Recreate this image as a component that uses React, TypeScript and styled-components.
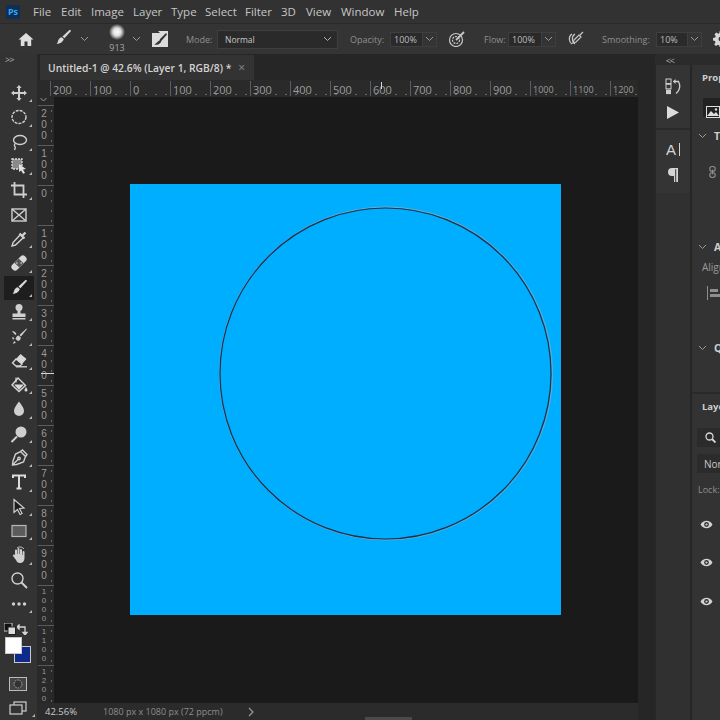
import * as React from "react";
import styled, { createGlobalStyle } from "styled-components";

const GlobalStyle = createGlobalStyle`
  html, body { margin: 0; padding: 0; background: #2b2b2b; }
  * { box-sizing: border-box; }
`;

const MENU_ITEMS = [
  ["File", 28],
  ["Edit", 30],
  ["Image", 42],
  ["Layer", 38],
  ["Type", 34],
  ["Select", 40],
  ["Filter", 36],
  ["3D", 25],
  ["View", 35],
  ["Window", 53],
  ["Help", 30],
];

const H_RULER = ["200", "100", "0", "100", "200", "300", "400", "500", "600", "700", "800", "900", "1000", "1100", "1200"];
const V_RULER = ["200", "100", "0", "100", "200", "300", "400", "500", "600", "700", "800", "900", "1000", "1100", "1200"];

const Screen = styled.div`
  width: 720px;
  height: 720px;
  overflow: hidden;
  position: relative;
  display: flex;
  flex-direction: column;
  background: #2b2b2b;
  color: #c4c4c4;
  font-family: "Open Sans", "Noto Sans", sans-serif;
`;

const MenuBar = styled.div`
  height: 23px;
  flex: none;
  display: flex;
  align-items: center;
  padding-left: 6px;
  background: #323232;
  font-size: 11.5px;
  color: #c6c6c6;
`;

const PsLogo = styled.div`
  width: 14px;
  height: 14px;
  margin-right: 13px;
  border-radius: 2px;
  background: #0f2f55;
  color: #31a8ff;
  font-size: 9px;
  font-weight: 700;
  line-height: 14px;
  text-align: center;
`;

const MenuItem = styled.span<{ $w: number }>`
  width: ${(p) => p.$w}px;
  flex: none;
`;

const OptionsBar = styled.div`
  height: 31px;
  flex: none;
  display: flex;
  align-items: center;
  background: #343434;
  border-top: 1px solid #2a2a2a;
  font-size: 9px;
  color: #8f8f8f;
`;

const OptionIcon = styled.svg<{ $left: number }>`
  flex: none;
  margin-left: ${(p) => p.$left}px;
  display: block;
`;

const BrushPreview = styled.div`
  flex: none;
  width: 30px;
  margin: -2px 0 0 13px;
  display: flex;
  flex-direction: column;
  align-items: center;
  gap: 3px;
  font-size: 9px;
  line-height: 10px;
  color: #a4a4a4;
`;

const BrushDot = styled.div`
  width: 16px;
  height: 16px;
  border-radius: 50%;
  background: radial-gradient(circle, #ffffff 0%, #dddddd 35%, #343434 72%);
`;

const OptionLabel = styled.span<{ $left: number; $w: number }>`
  flex: none;
  width: ${(p) => p.$w}px;
  margin-left: ${(p) => p.$left}px;
  white-space: nowrap;
`;

const SelectBox = styled.div<{ $left: number; $w: number }>`
  flex: none;
  width: ${(p) => p.$w}px;
  height: 19px;
  margin-left: ${(p) => p.$left}px;
  display: flex;
  align-items: center;
  justify-content: space-between;
  padding: 0 5px 0 7px;
  border: 1px solid #3f3f3f;
  background: #2a2a2a;
  color: #c6c6c6;
  font-size: 8.5px;
`;

const PercentBox = styled.div<{ $left: number; $w: number }>`
  flex: none;
  width: ${(p) => p.$w}px;
  height: 15px;
  margin-left: ${(p) => p.$left}px;
  display: flex;
  align-items: center;
  padding-left: 3px;
  background: #2a2a2a;
  border: 1px solid #3e3e3e;
  color: #bdbdbd;
  font-size: 9px;
`;

const ChevronBox = styled.div`
  flex: none;
  width: 14px;
  height: 15px;
  display: flex;
  align-items: center;
  justify-content: center;
  border: 1px solid #3e3e3e;
  border-left: none;
`;

const Body = styled.div`
  flex: 1;
  min-height: 0;
  display: flex;
`;

const ToolColumn = styled.div`
  width: 38px;
  flex: none;
  position: relative;
  display: flex;
  flex-direction: column;
  padding-top: 27px;
  background: #333333;
  border-right: 1px solid #2a2a2a;
`;

const CollapseMark = styled.span`
  position: absolute;
  left: 5px;
  top: -1px;
  font-size: 9px;
  color: #b0b0b0;
  letter-spacing: -1px;
`;

const ToolButton = styled.div<{ $active?: boolean }>`
  height: 24.4px;
  width: 30px;
  margin-left: 4px;
  position: relative;
  display: flex;
  align-items: center;
  justify-content: center;
  background: ${(p) => (p.$active ? "#1e1e1e" : "transparent")};
  svg {
    display: block;
  }
`;

const CornerMark = styled.i`
  position: absolute;
  right: 2px;
  bottom: 3px;
  width: 0;
  height: 0;
  border-left: 3px solid transparent;
  border-bottom: 3px solid #b8b8b8;
`;

const SwatchTools = styled.div`
  height: 20px;
  display: flex;
  align-items: center;
  justify-content: space-between;
  padding: 6px 9px 0 4px;
`;

const SwatchStack = styled.div`
  position: relative;
  height: 28px;
  margin: 1px 0 0 4px;
`;

const Swatch = styled.div<{ $color: string; $x: number; $y: number }>`
  position: absolute;
  left: ${(p) => p.$x}px;
  top: ${(p) => p.$y}px;
  width: 17px;
  height: 17px;
  background: ${(p) => p.$color};
  border: 1px solid #c8c8c8;
`;

const BottomTool = styled.div<{ $top: number }>`
  height: 24px;
  margin-top: ${(p) => p.$top}px;
  display: flex;
  align-items: center;
  justify-content: center;
  padding-right: 2px;
  position: relative;
`;

const Workspace = styled.div`
  width: 617px;
  flex: none;
  display: flex;
  background: #262626;
`;

const DocColumn = styled.div`
  width: 600px;
  flex: none;
  display: flex;
  flex-direction: column;
`;

const TabStrip = styled.div`
  height: 26px;
  flex: none;
  display: flex;
  padding: 1px 0 0 2px;
  background: #262626;
`;

const DocTab = styled.div`
  width: 214px;
  display: flex;
  align-items: center;
  justify-content: space-between;
  padding: 0 9px 0 8px;
  background: #333333;
  color: #d4d4d4;
  font-size: 10.3px;
  font-weight: 600;
  white-space: nowrap;
`;

const CloseMark = styled.span`
  color: #8a8a8a;
  font-size: 12px;
  font-weight: 400;
`;

const HRuler = styled.div`
  height: 17px;
  flex: none;
  position: relative;
  display: flex;
  padding-left: 12px;
  background: #2a2a2a;
  overflow: hidden;
`;

const HTick = styled.div<{ $small: boolean }>`
  width: 40px;
  flex: none;
  height: 15px;
  margin-top: 1px;
  padding-left: 2px;
  border-left: 1px solid #5c5c5c;
  color: #9c9c9c;
  font-size: ${(p) => (p.$small ? "9px" : "11px")};
  line-height: 17px;
  background: radial-gradient(circle, #666 0.7px, transparent 1px) 0 12px / 10px 3px repeat-x;
`;

const RulerMarker = styled.i`
  position: absolute;
  left: 343px;
  top: 2px;
  width: 1px;
  height: 7px;
  background: #d8d8d8;
`;

const Stage = styled.div`
  flex: 1;
  min-height: 0;
  display: flex;
`;

const VRuler = styled.div`
  width: 16px;
  flex: none;
  position: relative;
  padding-top: 8px;
  background: #2a2a2a;
  overflow: hidden;
  will-change: opacity;
  opacity: 0.99;
`;

const VTick = styled.div<{ $tight: boolean }>`
  height: 40px;
  padding: ${(p) => (p.$tight ? "1px" : "2px")} 0 0 1px;
  border-top: 1px solid #5c5c5c;
  color: #9c9c9c;
  font-family: "Liberation Sans", sans-serif;
  font-size: ${(p) => (p.$tight ? "8px" : "10px")};
  line-height: ${(p) => (p.$tight ? "9px" : "11px")};
  background: radial-gradient(circle, #666 0.7px, transparent 1px) 12px 0 / 3px 10px repeat-y;
  span {
    display: block;
    width: 10px;
    text-align: center;
  }
`;

const VMarker = styled.i`
  position: absolute;
  left: 3px;
  top: 276px;
  width: 13px;
  height: 1px;
  background: #d8d8d8;
`;

const CornerChevron = styled.svg`
  position: absolute;
  left: 2px;
  top: 0;
`;

const Pasteboard = styled.div`
  flex: 1;
  padding: 87px 0 0 76px;
  background: #1a1a1a;
`;

const Artboard = styled.div`
  width: 431px;
  height: 431px;
  background: #00aeff;
  svg {
    display: block;
  }
`;

const StatusBar = styled.div`
  height: 17px;
  flex: none;
  display: flex;
  align-items: center;
  padding-left: 7px;
  background: #2b2b2b;
  font-size: 9px;
  color: #8e8e8e;
`;

const ZoomValue = styled.span`
  width: 58px;
  font-size: 9.5px;
  color: #c8c8c8;
`;

const DocSize = styled.span`
  width: 145px;
  white-space: nowrap;
`;

const Gutter = styled.div`
  flex: 1;
`;

const Dock = styled.div`
  width: 37px;
  flex: none;
  background: #303030;
  border-left: 1px solid #282828;
  border-right: 2px solid #262626;
  margin-top: 11px;
`;

const DockTop = styled.div`
  position: absolute;
  right: 46px;
  top: 54px;
  font-size: 9px;
  color: #b0b0b0;
  letter-spacing: -1px;
`;

const DockGroup = styled.div<{ $h: number; $pad: number; $line?: boolean }>`
  height: ${(p) => p.$h}px;
  padding-top: ${(p) => p.$pad}px;
  display: flex;
  flex-direction: column;
  align-items: center;
  gap: 10px;
  background: #343434;
  border-bottom: ${(p) => (p.$line ? "2px solid #2a2a2a" : "none")};
  svg {
    flex: none;
  }
`;

const SidePanel = styled.div`
  width: 28px;
  flex: none;
  display: flex;
  flex-direction: column;
  margin-top: 11px;
  background: #333333;
  overflow: hidden;
  white-space: nowrap;
`;

const PanelTitle = styled.div<{ $h: number }>`
  height: ${(p) => p.$h}px;
  flex: none;
  padding: 6px 0 0 10px;
  font-size: 9.5px;
  font-weight: 700;
  color: #cfcfcf;
`;

const ThumbBox = styled.div`
  height: 19px;
  flex: none;
  margin: 0 0 0 11px;
  padding: 3px 0 0 3px;
  background: #222222;
`;

const SectionHead = styled.div<{ $h: number }>`
  height: ${(p) => p.$h}px;
  flex: none;
  padding-left: 6px;
  display: flex;
  align-items: flex-start;
  font-size: 10.5px;
  font-weight: 700;
  color: #cfcfcf;
  svg {
    flex: none;
  }
`;

const SectionInner = styled.div`
  display: flex;
  align-items: center;
  gap: 7px;
  margin-top: 12px;
`;

const PanelGap = styled.div<{ $h: number }>`
  height: ${(p) => p.$h}px;
  flex: none;
`;

const AlignLabel = styled.div`
  padding-left: 10px;
  font-size: 10px;
  color: #9a9a9a;
  height: 16px;
  flex: none;
`;

const IconRow = styled.div<{ $h: number; $pad: number }>`
  height: ${(p) => p.$h}px;
  flex: none;
  padding-left: ${(p) => p.$pad}px;
  display: flex;
  align-items: center;
  svg {
    flex: none;
  }
`;

const LayersPanel = styled.div`
  flex: 1;
  display: flex;
  flex-direction: column;
  background: #333333;
  border-top: 2px solid #2a2a2a;
`;

const LayerField = styled.div<{ $pad: number }>`
  height: 19px;
  flex: none;
  margin: 0 0 7px 5px;
  padding-left: ${(p) => p.$pad}px;
  display: flex;
  align-items: center;
  gap: 4px;
  background: #2b2b2b;
  font-size: 10px;
  color: #c8c8c8;
  svg {
    flex: none;
  }
`;

const LockLabel = styled.div`
  height: 22px;
  flex: none;
  margin-top: 3px;
  padding-left: 6px;
  font-size: 9px;
  color: #8f8f8f;
`;

const LayerRow = styled.div`
  height: 38.5px;
  flex: none;
  padding-left: 8px;
  display: flex;
  align-items: center;
  svg {
    flex: none;
  }
`;

const BottomNub = styled.i`
  position: absolute;
  left: 365px;
  bottom: 0;
  width: 47px;
  height: 3px;
  background: #4a4a4a;
`;

const Chevron = ({ left = 0, color = "#9a9a9a" }: { left?: number; color?: string }) => (
  <OptionIcon $left={left} width="9" height="6" viewBox="0 0 9 6" fill="none" stroke={color} strokeWidth="1">
    <path d="M1 1l3.5 3.5L8 1" />
  </OptionIcon>
);

const BrushGlyph = ({ size = 18, color = "#d8d8d8" }: { size?: number; color?: string }) => (
  <svg width={size} height={size} viewBox="0 0 18 18" fill={color}>
    <path d="M16.5 1.2c.5.4.4 1 0 1.5L10 9.9 7.9 8 15 1.4c.5-.4 1-.5 1.500-.2z" />
    <path d="M7.200 8.800l2 1.900c-.4 2.800-3.600 5.300-7.600 5 1.500-.9 1.300-2.600 2-4 .7-1.600 2-2.600 3.600-2.900z" />
  </svg>
);

const Stroke = ({ children, size = 18 }: { children: React.ReactNode; size?: number }) => (
  <svg width={size} height={size} viewBox="0 0 18 18" fill="none" stroke="#cfcfcf" strokeWidth="1.4">
    {children}
  </svg>
);

const Filled = ({ children, size = 18 }: { children: React.ReactNode; size?: number }) => (
  <svg width={size} height={size} viewBox="0 0 18 18" fill="#cfcfcf">
    {children}
  </svg>
);

const TOOLS: { key: string; icon: React.ReactNode; corner?: boolean; active?: boolean }[] = [
  { key: "move", corner: true, icon: <Filled><path d="M9 1l2.600 3H10v4h4V6.400L17 9l-3 2.600V10h-4v4h1.600L9 17l-2.600-3H8v-4H4v1.600L1 9l3-2.600V8h4V4H6.400z" /></Filled> },
  { key: "marquee", corner: true, icon: <Stroke><ellipse cx="9" cy="9" rx="7" ry="6.500" strokeDasharray="3 1" /></Stroke> },
  { key: "lasso", corner: true, icon: <Stroke><ellipse cx="10" cy="7" rx="6.500" ry="4.500" /><path d="M5 10.500c-1 2-.5 3 .5 3.500M5.500 14l-1 3" /></Stroke> },
  { key: "subject", corner: true, icon: <svg width="18" height="18" viewBox="0 0 18 18"><rect x="2" y="2" width="10" height="10" fill="#8a8a8a" stroke="#dcdcdc" strokeWidth="1.300" strokeDasharray="2 1" /><path d="M9 7l7 5-3 .6 2 3.400-2 .8-1.800-3.400L9 15z" fill="#e2e2e2" /></svg> },
  { key: "crop", corner: true, icon: <Stroke><path d="M1 4.500h12.500V17M4.500 1v12.500H17" strokeWidth="1.800" /></Stroke> },
  { key: "frame", icon: <Stroke><rect x="2" y="3" width="14" height="12" /><path d="M2 3l14 12M16 3L2 15" /></Stroke> },
  { key: "eyedropper", corner: true, icon: <Stroke><path d="M10 5L3 12.500 2 16l3.500-1L13 8" /><path d="M9.500 3.500l5 5M12 6l3.500-3.500" strokeWidth="2.400" /></Stroke> },
  { key: "heal", corner: true, icon: <svg width="20" height="20" viewBox="0 0 20 20"><g transform="rotate(-45 10 10)"><rect x="1" y="6.500" width="18" height="7" rx="3" fill="#d8d8d8" /><rect x="7" y="6.500" width="6" height="7" fill="#555" /><circle cx="8.500" cy="8.500" r=".8" fill="#ddd" /><circle cx="11.500" cy="11.500" r=".8" fill="#ddd" /></g></svg> },
  { key: "brush", corner: true, active: true, icon: <BrushGlyph size={17} /> },
  { key: "stamp", corner: true, icon: <Filled><circle cx="9" cy="4.500" r="3.500" /><path d="M7.500 7h3v3.500h5V14h-13v-3.500h5z" /><rect x="2.500" y="15" width="13" height="1.500" /></Filled> },
  { key: "mixer", corner: true, icon: <Filled><path d="M16.500 1.500L9.500 8l1.500 1.500 6-7.500zM8.500 8.500c-2 .5-2.500 2-3 3.500l2.500 2c2-.5 2.800-2 2.800-3.500zM2 4c2 0 3.500 1 4.500 3L5.500 8C4 6.500 3 5.500 2 4zM2 10l2.500 1L3 13zM4 14l2 1.500L3 17z" /></Filled> },
  { key: "eraser", corner: true, icon: <svg width="18" height="18" viewBox="0 0 18 18"><path d="M10.500 2l6 5-4.500 5-6-5z" fill="#d8d8d8" /><path d="M6 7l6 5-2 2H6L2.500 11z" fill="none" stroke="#d8d8d8" strokeWidth="1.300" /><path d="M6 14.800h11" stroke="#d8d8d8" strokeWidth="1.300" /></svg> },
  { key: "bucket", corner: true, icon: <svg width="18" height="18" viewBox="0 0 18 18"><path d="M8 2l7.500 7.500L9 15.500 2 9z" fill="none" stroke="#d8d8d8" strokeWidth="1.400" /><path d="M4 8.500h10L9 14z" fill="#d8d8d8" /><path d="M6 1.500v5" stroke="#d8d8d8" strokeWidth="1.200" /><path d="M16 11c1 1.500 1.400 2.500 1.400 3.200a1.400 1.400 0 01-2.800 0c0-.7.400-1.700 1.400-3.200z" fill="#d8d8d8" /></svg> },
  { key: "blur", corner: true, icon: <Filled><path d="M9 1.500c3 4 5 6.500 5 9.500a5 5 0 01-10 0c0-3 2-5.500 5-9.500z" /></Filled> },
  { key: "dodge", corner: true, icon: <svg width="18" height="18" viewBox="0 0 18 18"><circle cx="11" cy="7" r="5.500" fill="#cfcfcf" /><path d="M7 11.500L1.500 17" stroke="#cfcfcf" strokeWidth="2" /></svg> },
  { key: "pen", corner: true, icon: <Stroke><path d="M10.500 2.500l5 5-2 5.500-7 2.500-4 .5.500-4 2.500-7z" /><path d="M10.500 2.500l2-1.500 4.500 4.500-1.500 2M2.500 16L8 10.500" /><circle cx="9" cy="9.500" r="1.200" /></Stroke> },
  { key: "type", corner: true, icon: <svg width="18" height="18" viewBox="0 0 18 18"><path d="M3 5V2.500h12V5M9 2.500v13M6.500 15.500h5" fill="none" stroke="#dcdcdc" strokeWidth="2" /></svg> },
  { key: "path", corner: true, icon: <svg width="18" height="18" viewBox="0 0 18 18"><path d="M4 1.500l10 8.500-4.500.5 2.500 5-2 1-2.500-5L4 14.500z" fill="#1c1c1c" stroke="#cfcfcf" strokeWidth="1.200" /></svg> },
  { key: "rect", corner: true, icon: <svg width="18" height="18" viewBox="0 0 18 18"><rect x="2" y="3.500" width="14" height="11" fill="#5c5c5c" stroke="#b8b8b8" strokeWidth="1.200" /></svg> },
  { key: "hand", corner: true, icon: <Filled><path d="M5 9V4.500a1 1 0 012 0V8h.5V3a1 1 0 012 0v5h.5V4a1 1 0 012 0v5h.5V6a1 1 0 012 0v6c0 3-2 5-4.500 5S7 16 6 14l-3-4c-.6-1 .8-2 1.600-1.200z" /><path d="M7 2C8.500.5 12 .5 14 3" fill="none" stroke="#cfcfcf" /></Filled> },
  { key: "zoom", icon: <Stroke><circle cx="7.500" cy="7.500" r="5.500" /><path d="M11.500 11.500L17 17" strokeWidth="2" /></Stroke> },
  { key: "more", corner: true, icon: <Filled><circle cx="3.500" cy="9" r="1.700" /><circle cx="9" cy="9" r="1.700" /><circle cx="14.500" cy="9" r="1.700" /></Filled> },
];

const Eye = () => (
  <svg width="13" height="9" viewBox="0 0 13 9">
    <path d="M.5 4.500C2 2 4 .8 6.500.8S11 2 12.500 4.500C11 7 9 8.200 6.500 8.200S2 7 .5 4.500z" fill="#d4d4d4" />
    <circle cx="6.500" cy="4.500" r="2.400" fill="#333" />
    <circle cx="6.500" cy="4.500" r="1.100" fill="#d4d4d4" />
  </svg>
);

export default function App() {
  return (
    <Screen>
      <GlobalStyle />
      <MenuBar>
        <PsLogo>Ps</PsLogo>
        {MENU_ITEMS.map(([name, width]) => (
          <MenuItem key={name as string} $w={width as number}>
            {name}
          </MenuItem>
        ))}
      </MenuBar>

      <OptionsBar>
        <OptionIcon $left={18} width="16" height="15" viewBox="0 0 16 15" fill="#dedede">
          <path d="M8 1L.5 7.500h2.300V14h3.700V9.500h3V14h3.700V7.500h2.300z" />
        </OptionIcon>
        <OptionIcon as="div" $left={21}>
          <BrushGlyph size={17} />
        </OptionIcon>
        <Chevron left={8} />
        <BrushPreview>
          <BrushDot />
          913
        </BrushPreview>
        <Chevron />
        <OptionIcon $left={11} width="16" height="16" viewBox="0 0 16 16">
          <rect width="16" height="16" fill="#dcdcdc" />
          <path d="M14 2L8 8l-.5 1.500C5.500 10 5 12 2.500 13.500 6 14.500 9 12.500 9.500 9.800L15 3.500z" fill="#343434" />
          <path d="M0 0h6l2 2H0z" fill="#343434" />
        </OptionIcon>
        <OptionLabel $left={18} $w={31}>Mode:</OptionLabel>
        <SelectBox $left={0} $w={121}>
          Normal
          <Chevron color="#b0b0b0" />
        </SelectBox>
        <OptionLabel $left={12} $w={40}>Opacity:</OptionLabel>
        <PercentBox $left={0} $w={33}>100%</PercentBox>
        <ChevronBox><Chevron /></ChevronBox>
        <OptionIcon $left={11} width="18" height="16" viewBox="0 0 18 16" fill="none" stroke="#c8c8c8" strokeWidth="1.200">
          <circle cx="8" cy="9" r="6.500" />
          <circle cx="8" cy="9" r="3.500" strokeDasharray="2 1" />
          <path d="M8 9l8-8" strokeWidth="1.800" />
        </OptionIcon>
        <OptionLabel $left={18} $w={24}>Flow:</OptionLabel>
        <PercentBox $left={0} $w={34}>100%</PercentBox>
        <ChevronBox><Chevron /></ChevronBox>
        <OptionIcon $left={11} width="18" height="16" viewBox="0 0 18 16" fill="none" stroke="#c8c8c8" strokeWidth="1.200">
          <path d="M5 3a6 6 0 000 10" />
          <path d="M8 3a6 6 0 000 10" />
          <path d="M7 9l5-5 2 2-5 5-3 1zM13 4l3-3" />
        </OptionIcon>
        <OptionLabel $left={17} $w={54}>Smoothing:</OptionLabel>
        <PercentBox $left={0} $w={32}>10%</PercentBox>
        <ChevronBox><Chevron /></ChevronBox>
        <OptionIcon $left={11} width="16" height="16" viewBox="0 0 16 16" fill="#d8d8d8">
          <path d="M6.700 0h2.600l.4 2.200 1.400.6 1.900-1.300 1.800 1.800-1.300 1.900.6 1.400 2.200.4v2.600l-2.200.4-.6 1.400 1.300 1.900-1.800 1.800-1.900-1.300-1.400.6-.4 2.200H6.700l-.4-2.200-1.400-.6L3 15.100l-1.800-1.800 1.300-1.900-.6-1.400L0 9.600V7l2.200-.4.600-1.400L1.500 3.300 3.300 1.500l1.900 1.300 1.100-.6zM8 5.500a2.500 2.500 0 100 5 2.500 2.500 0 000-5z" />
        </OptionIcon>
      </OptionsBar>

      <Body>
        <ToolColumn>
          <CollapseMark>&gt;&gt;</CollapseMark>
          {TOOLS.map((tool) => (
            <ToolButton key={tool.key} $active={tool.active}>
              {tool.icon}
              {tool.corner && <CornerMark />}
            </ToolButton>
          ))}
          <SwatchTools>
            <svg width="12" height="12" viewBox="0 0 12 12">
              <rect x="0" y="0" width="8" height="8" fill="#111" stroke="#ccc" />
              <rect x="4" y="4" width="7.500" height="7.500" fill="#ddd" stroke="#222" />
            </svg>
            <svg width="11" height="11" viewBox="0 0 11 11" fill="none" stroke="#d4d4d4" strokeWidth="1.300">
              <path d="M1 3h7v7M0 3l2-2v4zM8 11L6 8.500h4z" />
            </svg>
          </SwatchTools>
          <SwatchStack>
            <Swatch $color="#0d2a8c" $x={10} $y={9} />
            <Swatch $color="#ffffff" $x={1} $y={0} />
          </SwatchStack>
          <BottomTool $top={7}>
            <svg width="18" height="14" viewBox="0 0 18 14">
              <rect x=".5" y=".5" width="17" height="13" fill="#444" stroke="#bbb" />
              <circle cx="9" cy="7" r="4" fill="#333" stroke="#aaa" strokeDasharray="1.500 1" />
            </svg>
          </BottomTool>
          <BottomTool $top={0}>
            <svg width="18" height="15" viewBox="0 0 18 15" fill="#333" stroke="#cfcfcf" strokeWidth="1.200">
              <rect x="5" y="1" width="12" height="9" />
              <rect x="1" y="4" width="12" height="9" />
            </svg>
            <CornerMark />
          </BottomTool>
        </ToolColumn>

        <Workspace>
          <DocColumn>
            <TabStrip>
              <DocTab>
                Untitled-1 @ 42.6% (Layer 1, RGB/8) *
                <CloseMark>×</CloseMark>
              </DocTab>
            </TabStrip>
            <HRuler>
              {H_RULER.map((label, i) => (
                <HTick key={i} $small={label.length > 3}>{label}</HTick>
              ))}
              <RulerMarker />
            </HRuler>
            <Stage>
              <VRuler>
                <CornerChevron width="7" height="5" viewBox="0 0 7 5" fill="none" stroke="#9a9a9a">
                  <path d="M.5 1l3 3 3-3" />
                </CornerChevron>
                {V_RULER.map((label, i) => (
                  <VTick key={i} $tight={label.length > 3}>
                    {label.split("").map((digit, j) => (
                      <span key={j}>{digit}</span>
                    ))}
                  </VTick>
                ))}
                <VMarker />
              </VRuler>
              <Pasteboard>
                <Artboard>
                  <svg width="431" height="431" viewBox="0 0 431 431" fill="none">
                    <circle cx="256" cy="189.500" r="166.500" stroke="#8fa4b4" strokeWidth="0.800" />
                    <circle cx="255.500" cy="189.500" r="165.500" stroke="#1c2f4a" strokeWidth="1.200" />
                  </svg>
                </Artboard>
              </Pasteboard>
            </Stage>
            <StatusBar>
              <ZoomValue>42.56%</ZoomValue>
              <DocSize>1080 px x 1080 px (72 ppcm)</DocSize>
              <svg width="6" height="10" viewBox="0 0 6 10" fill="none" stroke="#9a9a9a" strokeWidth="1.200">
                <path d="M1 1l4 4-4 4" />
              </svg>
            </StatusBar>
          </DocColumn>
          <Gutter />
        </Workspace>

        <Dock>
          <DockGroup $h={65} $pad={13} $line>
            <svg width="17" height="17" viewBox="0 0 17 17" fill="#cfcfcf">
              <rect x="1" y="1" width="5" height="4.500" fill="none" stroke="#cfcfcf" />
              <rect x="1" y="6.300" width="5" height="4.500" fill="none" stroke="#cfcfcf" />
              <rect x="1" y="11.600" width="5" height="4.500" />
              <path d="M8.500 3.500h5c2 4 2 8-2.500 12" fill="none" stroke="#cfcfcf" strokeWidth="1.300" />
              <path d="M10.500 1L8 3.500 10.500 6z" />
            </svg>
            <svg width="14" height="15" viewBox="0 0 14 15" fill="#dcdcdc">
              <path d="M1 1l12 6.500L1 14z" />
            </svg>
          </DockGroup>
          <DockGroup $h={63} $pad={12}>
            <svg width="15" height="15" viewBox="0 0 15 15">
              <text x="0" y="13" fontFamily="'Liberation Sans', sans-serif" fontSize="15" fill="#d4d4d4">A</text>
              <path d="M13.500 1v13" stroke="#d4d4d4" />
            </svg>
            <svg width="12" height="16" viewBox="0 0 12 16" fill="#d4d4d4">
              <path d="M11 1H5a4 4 0 000 8h2v6h1.200V2.200h1V15h1.800V1z" />
            </svg>
          </DockGroup>
        </Dock>

        <SidePanel>
          <PanelTitle $h={33}>Properties</PanelTitle>
          <ThumbBox>
            <svg width="14" height="12" viewBox="0 0 14 12">
              <rect x=".5" y=".5" width="13" height="11" fill="none" stroke="#ddd" />
              <path d="M1 10l4-5 3 3 2-2 3 4z" fill="#ddd" />
              <circle cx="10" cy="3.500" r="1.200" fill="#ddd" />
            </svg>
          </ThumbBox>
          <SectionHead $h={26}>
            <SectionInner>
              <Chevron />
              T
            </SectionInner>
          </SectionHead>
          <IconRow $h={58} $pad={17}>
            <svg width="7" height="14" viewBox="0 0 9 16" fill="none" stroke="#8e8e8e" strokeWidth="1.400">
              <rect x="1" y="1" width="7" height="6" rx="3" />
              <rect x="1" y="9" width="7" height="6" rx="3" />
              <path d="M4.500 5v6" />
            </svg>
          </IconRow>
          <PanelGap $h={27} />
          <SectionHead $h={32}>
            <SectionInner>
              <Chevron />
              A
            </SectionInner>
          </SectionHead>
          <AlignLabel>Align</AlignLabel>
          <IconRow $h={34} $pad={15}>
            <svg width="13" height="14" viewBox="0 0 13 14" fill="#8e8e8e">
              <rect x="0" y="0" width="1" height="14" />
              <rect x="3" y="3" width="8" height="3" />
              <rect x="3" y="8" width="10" height="3" />
            </svg>
          </IconRow>
          <PanelGap $h={19} />
          <SectionHead $h={63}>
            <SectionInner>
              <Chevron />
              Q
            </SectionInner>
          </SectionHead>
          <LayersPanel>
            <PanelTitle $h={34}>Layers</PanelTitle>
            <LayerField $pad={8}>
              <svg width="11" height="11" viewBox="0 0 11 11" fill="none" stroke="#d8d8d8" strokeWidth="1.300">
                <circle cx="4.500" cy="4.500" r="3.500" />
                <path d="M7 7l3.500 3.500" strokeWidth="1.800" />
              </svg>
              Kind
            </LayerField>
            <LayerField $pad={7}>Normal</LayerField>
            <LockLabel>Lock:</LockLabel>
            <LayerRow><Eye /></LayerRow>
            <LayerRow><Eye /></LayerRow>
            <LayerRow><Eye /></LayerRow>
          </LayersPanel>
        </SidePanel>
      </Body>
      <DockTop>&lt;&lt;</DockTop>
      <BottomNub />
    </Screen>
  );
}
